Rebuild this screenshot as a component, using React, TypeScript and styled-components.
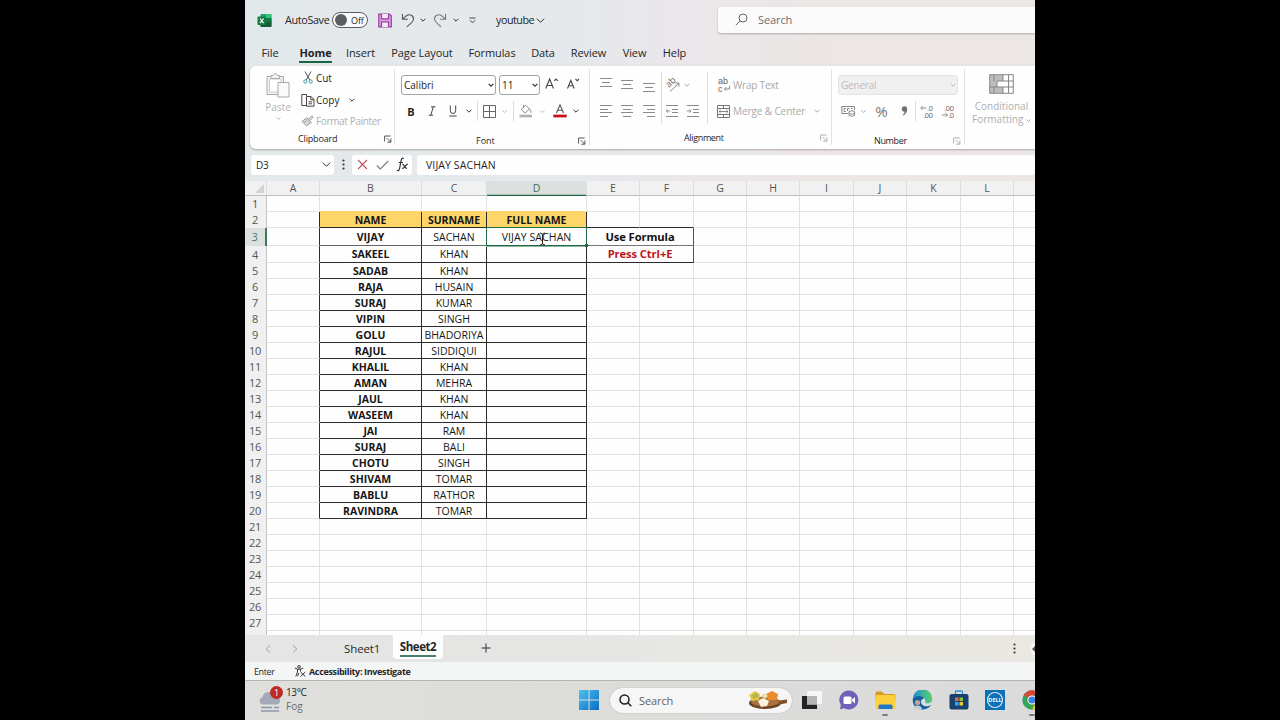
import React from "react";
import styled, { createGlobalStyle } from "styled-components";

const UI = `"Open Sans", "Noto Sans", sans-serif`;
const SMALL = `"Liberation Sans", sans-serif`;

const Global = createGlobalStyle`
  * { box-sizing: border-box; }
  body { margin: 0; background: #000; font-family: ${UI}; }
`;

const Stage = styled.div`
  width: 1280px;
  height: 720px;
  display: flex;
  justify-content: center;
  background: #000;
  overflow: hidden;
`;

const Window = styled.main`
  width: 790px;
  height: 720px;
  display: flex;
  flex-direction: column;
  overflow: hidden;
  background: linear-gradient(90deg, #e3e8ea 0%, #e5e9ec 40%, #ebe6ea 56%, #ece6e4 75%, #ece7e4 100%);
  color: #262626;
`;

const Text = styled.span<{ $size?: number; $color?: string; $bold?: boolean; $ls?: number }>`
  font-size: ${(p) => p.$size ?? 10}px;
  color: ${(p) => p.$color ?? "#262626"};
  font-weight: ${(p) => (p.$bold ? 700 : 400)};
  letter-spacing: ${(p) => p.$ls ?? 0}px;
  line-height: 1;
  white-space: nowrap;
`;

const Slot = styled.span<{ $w: number; $left?: boolean; $dy?: number }>`
  flex: none;
  width: ${(p) => p.$w}px;
  display: flex;
  align-items: center;
  justify-content: ${(p) => (p.$left ? "flex-start" : "center")};
  padding-top: ${(p) => Math.max(0, p.$dy ?? 0)}px;
  padding-bottom: ${(p) => Math.max(0, -(p.$dy ?? 0))}px;

  svg {
    flex: none;
    overflow: visible;
  }
`;

/* Title bar */
const TitleBar = styled.header`
  flex: none;
  height: 40px;
  display: flex;
  align-items: center;
  padding-left: 10px;
`;

const Toggle = styled.span`
  width: 36px;
  height: 16px;
  border: 1px solid #5c5c5c;
  border-radius: 8px;
  background: #fafafa;
  display: flex;
  align-items: center;
  gap: 4px;
  padding-left: 2px;
`;

const Knob = styled.i`
  width: 12px;
  height: 12px;
  border-radius: 50%;
  background: #5b5f61;
`;

const TitleSearch = styled.div`
  flex: 1;
  height: 26px;
  margin: 0 0 1px 172px;
  display: flex;
  align-items: center;
  gap: 10px;
  padding-left: 17px;
  background: #fcfbfb;
  border-radius: 3px 0 0 3px;
  box-shadow: 0 1px 2px rgba(0, 0, 0, 0.25);
`;

/* Ribbon */
const Tabs = styled.nav`
  flex: none;
  height: 25px;
  display: flex;
  padding-left: 9px;
`;

const Tab = styled.span<{ $w: number; $active?: boolean }>`
  width: ${(p) => p.$w}px;
  height: 25px;
  display: flex;
  justify-content: center;
  align-items: flex-start;
  padding-top: 7px;

  span {
    height: 16px;
    border-bottom: 2px solid ${(p) => (p.$active ? "#14683f" : "transparent")};
  }
`;

const Ribbon = styled.section`
  flex: none;
  height: 84px;
  margin-left: 5px;
  display: flex;
  background: #fefefe;
  border-top: 1px solid #e6e6e6;
  border-radius: 6px 0 0 6px;
  box-shadow: 0 1px 2px rgba(0, 0, 0, 0.28);
`;

const Group = styled.div<{ $w: number }>`
  flex: none;
  width: ${(p) => p.$w}px;
  display: flex;
  flex-direction: column;
  border-right: 1px solid #e2e2e2;
  margin: 3px 0 4px;
`;

const Tools = styled.div`
  flex: none;
  display: flex;
  flex-direction: column;
  height: 63px;
  padding: 3px 0 0 6px;
`;

const ToolRow = styled.div<{ $h?: number }>`
  height: ${(p) => p.$h ?? 26}px;
  display: flex;
  align-items: center;
`;

const Caption = styled.footer<{ $pad: number; $end: number }>`
  display: flex;
  flex: none;
  align-items: center;
  justify-content: space-between;
  height: 15px;
  margin-top: 1px;
  padding: 0 ${(p) => p.$end}px 0 ${(p) => p.$pad}px;
`;

const ClipTools = styled.div`
  display: flex;
  height: 63px;
`;

const PasteButton = styled.div`
  width: 49px;
  padding: 3px 0 0 7px;
  display: flex;
  flex-direction: column;
  align-items: center;
  gap: 4px;
`;

const ClipList = styled.div`
  display: flex;
  flex-direction: column;
  padding-left: 1px;
  margin-top: -2px;
`;

const Combo = styled.span<{ $w: number; $off?: boolean }>`
  width: ${(p) => p.$w}px;
  height: 20px;
  margin-right: 3px;
  display: flex;
  align-items: center;
  justify-content: space-between;
  padding: 0 1px 0 2px;
  border: 1px solid ${(p) => (p.$off ? "#e4e4e4" : "#a2a2a2")};
  border-radius: 3px;
  background: ${(p) => (p.$off ? "#f0f0f0" : "#fff")};
`;

const Rule = styled.i<{ $h?: number }>`
  width: 1px;
  height: ${(p) => p.$h ?? 20}px;
  background: #dcdcdc;
`;

const AlignTools = styled.div`
  display: flex;
  height: 63px;
  padding: 3px 0 0 5px;
`;

const AlignBlock = styled.div<{ $w: number }>`
  width: ${(p) => p.$w}px;
  flex: none;
`;

const CondButton = styled.div`
  width: 73px;
  padding-top: 8px;
  display: flex;
  flex: none;
  flex-direction: column;
  align-items: center;
  gap: 3px;
`;

const CondLabel = styled.div`
  padding-top: 4px;
  display: flex;
  flex-direction: column;
  align-items: center;
  gap: 3px;
`;

/* Formula bar */
const FormulaBar = styled.div`
  flex: none;
  height: 31px;
  margin-bottom: 1px;
  display: flex;
  align-items: center;
  padding: 0 0 0 6px;
`;

const Box = styled.div<{ $w?: number }>`
  ${(p) => (p.$w ? `width: ${p.$w}px; flex: none;` : "flex: 1;")}
  height: 20px;
  display: flex;
  align-items: center;
  background: #fefefe;
  border-radius: 3px;
`;

/* Worksheet */
const Sheet = styled.section`
  flex: none;
  height: 454px;
  display: flex;
  flex-direction: column;
  overflow: hidden;
  background: #fefefe;
`;

const Row = styled.div<{ $h: number }>`
  flex: none;
  display: flex;
  height: ${(p) => p.$h}px;
`;

const ColHead = styled.div<{ $w: number; $on?: boolean }>`
  flex: none;
  width: ${(p) => p.$w}px;
  display: flex;
  align-items: center;
  justify-content: center;
  background: ${(p) => (p.$on ? "#dce1df" : "#f1f1f1")};
  border-right: 1px solid #dfdfdf;
  border-bottom: 1px solid ${(p) => (p.$on ? "#1d6b45" : "#bdbdbd")};
  ${(p) => p.$on && "box-shadow: inset 0 -1px 0 #a9c2b5;"}
`;

const Corner = styled(ColHead)`
  justify-content: flex-end;
  padding-right: 2px;
`;

const RowHead = styled.div<{ $on?: boolean }>`
  flex: none;
  width: 22px;
  display: flex;
  align-items: center;
  justify-content: center;
  padding: 0 1px 1px 0;
  background: ${(p) => (p.$on ? "#dce1df" : "#f0f0f0")};
  border-right: ${(p) => (p.$on ? "2px solid #3d7a5c" : "1px solid #c4c4c4")};
`;

const Cell = styled.div<{ $w: number; $r?: string; $b?: string; $bg?: string; $pad?: number }>`
  position: relative;
  flex: none;
  width: ${(p) => p.$w}px;
  display: flex;
  align-items: center;
  justify-content: center;
  padding-top: ${(p) => p.$pad ?? 0}px;
  background: ${(p) => p.$bg ?? "transparent"};
  border-right: 1px solid ${(p) => p.$r ?? "#e2e2e2"};
  border-bottom: 1px solid ${(p) => p.$b ?? "#e2e2e2"};
`;

const Selection = styled.i`
  position: absolute;
  z-index: 1;
  left: -1px;
  top: -1px;
  right: -1px;
  bottom: -1px;
  border: 1px solid #1f6b46;
  box-shadow: 0 1px 0 #8fb5a1;

  &::after {
    content: "";
    position: absolute;
    right: -2px;
    bottom: -2px;
    width: 3px;
    height: 3px;
    background: #1f6b46;
  }
`;

const Caret = styled.svg`
  position: absolute;
  z-index: 2;
  left: 51px;
  top: 4px;
`;

/* Sheet tabs, status, taskbar */
const SheetTabs = styled.div`
  flex: none;
  height: 27px;
  display: flex;
  align-items: center;
  background: linear-gradient(90deg, #e4e5e4, #e6e7e4 50%, #ebe8e2);
`;

const ActiveSheet = styled.span`
  flex: none;
  width: 50px;
  height: 24px;
  align-self: flex-start;
  display: flex;
  justify-content: center;
  align-items: flex-start;
  padding-top: 6px;
  background: #fefefe;
  border-radius: 0 0 4px 4px;

  span {
    height: 16px;
    border-bottom: 2px solid #4a8069;
  }
`;

const RoundBtn = styled.span`
  flex: none;
  width: 4px;
  height: 12px;
  margin-left: 4px;
  border-radius: 4px 0 0 4px;
  background: #f8f7f6;
  display: flex;
  align-items: center;
  justify-content: flex-end;
`;

const StatusBar = styled.div`
  flex: none;
  height: 19px;
  display: flex;
  align-items: center;
  padding-left: 9px;
  background: #f4f5f5;
  border-bottom: 1px solid #b3b4b4;
`;

const Taskbar = styled.footer`
  flex: 1;
  display: flex;
  align-items: center;
  padding: 0 0 1px 13px;
  background: linear-gradient(90deg, #dfe0dd, #dcddd9 45%, #dbdbdb 100%);
`;

const Weather = styled.div`
  flex: none;
  width: 318px;
  display: flex;
  gap: 3px;
`;

const WeatherText = styled.div`
  display: flex;
  flex-direction: column;
  gap: 4px;
  padding-top: 1px;
`;

const TaskSearch = styled.div`
  flex: none;
  width: 182px;
  height: 25px;
  margin: 0 1.6px 0 9px;
  border-radius: 13px;
  background: #f6f6f6;
  box-shadow: 0 0 1px rgba(0, 0, 0, 0.35);
  display: flex;
  align-items: center;
  padding-left: 9px;
`;

const TaskApp = styled.span<{ $open?: boolean }>`
  width: 36.7px;
  flex: none;
  height: 34px;
  display: flex;
  flex-direction: column;
  align-items: center;
  justify-content: center;
  position: relative;

  &::after {
    content: "";
    position: absolute;
    bottom: 1px;
    width: 6px;
    height: 2px;
    border-radius: 1px;
    background: ${(p) => (p.$open ? "#7b7b7b" : "transparent")};
  }
`;

const Chevron = ({ s = 6, c = "#333", w = 1 }: { s?: number; c?: string; w?: number }) => (
  <svg width={s} height={s} viewBox="0 0 6 6" fill="none" stroke={c} strokeWidth={(w * 6) / s}>
    <path d="M.6 1.8 3 4.2 5.4 1.8" />
  </svg>
);

const Launcher = ({ c = "#444" }: { c?: string }) => (
  <svg width="8" height="8" viewBox="0 0 8 8" fill="none" stroke={c} strokeWidth=".9">
    <path d="M.6 6.5V1h6M2.8 3.2 6.6 7M6.9 3.4V7.2H3.2" />
  </svg>
);

const Lines = ({ rows, c = "#8a8a8a" }: { rows: [number, number, number][]; c?: string }) => (
  <svg width="14" height="14" viewBox="0 0 14 14" stroke={c} strokeWidth="1">
    {rows.map(([x1, x2, y], i) => (
      <path key={i} d={`M${x1} ${y}H${x2}`} />
    ))}
  </svg>
);

const TopAlign = () => <Lines rows={[[1, 13, 0.5], [3, 11, 4.5], [1, 13, 8.5]]} />;
const MidAlign = () => <Lines rows={[[1, 13, 2.5], [3, 11, 6.5], [1, 13, 10.5]]} />;
const BotAlign = () => <Lines rows={[[1, 13, 5.5], [3, 11, 9.5], [1, 13, 13.5]]} />;
const LeftAlign = () => <Lines rows={[[1, 13, 1.5], [1, 9, 5.5], [1, 13, 8.5], [1, 9, 12.5]]} />;
const CenterAlign = () => <Lines rows={[[1, 13, 1.5], [3, 11, 5.5], [1, 13, 8.5], [3, 11, 12.5]]} />;
const RightAlign = () => <Lines rows={[[1, 13, 1.5], [5, 13, 5.5], [1, 13, 8.5], [5, 13, 12.5]]} />;

const Indent = ({ out }: { out?: boolean }) => (
  <svg width="14" height="14" viewBox="0 0 14 14" fill="none" stroke="#8a8a8a">
    <path d="M1 1.5H13M7 5.5H13M7 8.5H13M1 12.5H13" />
    <path d={out ? "M5.5 7H1.2M3 5.3 1.2 7 3 8.7" : "M.8 7H5M3.3 5.3 5 7 3.3 8.7"} strokeWidth=".9" />
  </svg>
);

const gridWidths = [53, 102, 65, 100, 53, 54, 53, 53, 54, 53, 54, 53, 22];
const letters = ["A", "B", "C", "D", "E", "F", "G", "H", "I", "J", "K", "L", ""];

const people: [string, string][] = [
  ["VIJAY", "SACHAN"],
  ["SAKEEL", "KHAN"],
  ["SADAB", "KHAN"],
  ["RAJA", "HUSAIN"],
  ["SURAJ", "KUMAR"],
  ["VIPIN", "SINGH"],
  ["GOLU", "BHADORIYA"],
  ["RAJUL", "SIDDIQUI"],
  ["KHALIL", "KHAN"],
  ["AMAN", "MEHRA"],
  ["JAUL", "KHAN"],
  ["WASEEM", "KHAN"],
  ["JAI", "RAM"],
  ["SURAJ", "BALI"],
  ["CHOTU", "SINGH"],
  ["SHIVAM", "TOMAR"],
  ["BABLU", "RATHOR"],
  ["RAVINDRA", "TOMAR"],
];

const INK = "#2b2b2b";
const GOLD = "#fdd568";

const rowHeight = (n: number) => (n === 3 ? 18 : n === 4 ? 17 : 16);

const SheetRow = ({ n }: { n: number }) => {
  const person = people[n - 3];
  const inTable = n >= 2 && n <= 20;
  const heads = ["", "NAME", "SURNAME", "FULL NAME"];
  const cells: React.ReactNode[] = [];
  gridWidths.forEach((w, i) => {
    if (i === 5 && (n === 3 || n === 4)) return;
    if (i === 4 && (n === 3 || n === 4)) {
      cells.push(
        <Cell key={i} $w={107} $r="#555" $b={n === 3 ? "#777" : INK}>
          <Text $size={11.2} $bold $ls={-0.1} $color={n === 3 ? "#111" : "#c01320"}>
            {n === 3 ? "Use Formula" : "Press Ctrl+E"}
          </Text>
        </Cell>
      );
      return;
    }
    const body = inTable && i >= 1 && i <= 3;
    const right = inTable && i <= 3 ? INK : undefined;
    let bottom: string | undefined = body ? (n === 3 ? "#666" : INK) : undefined;
    if (n === 1 && i >= 1 && i <= 3) bottom = GOLD;
    if (n === 2 && (i === 4 || i === 5)) bottom = INK;
    let label = "";
    if (body) label = n === 2 ? heads[i] : i === 3 ? (n === 3 ? "VIJAY SACHAN" : "") : person[i - 1];
    cells.push(
      <Cell key={i} $w={w} $r={right} $b={bottom} $pad={n === 4 ? 0 : 1} $bg={body && n === 2 ? GOLD : undefined}>
        {label && (
          <Text $size={10.5} $bold={n === 2 || i === 1} $ls={i === 3 && n === 3 ? 0.1 : 0} $color="#161616">
            {label}
          </Text>
        )}
        {n === 3 && i === 3 && (
          <>
            <Selection />
            <Caret width="9" height="14" viewBox="0 0 9 14" fill="none" stroke="#222">
              <path d="M2 1Q4.5 1 4.5 3V11Q4.5 13 2 13M7 1Q4.5 1 4.5 3M7 13Q4.5 13 4.5 11" />
            </Caret>
          </>
        )}
      </Cell>
    );
  });
  return (
    <Row $h={rowHeight(n)}>
      <RowHead $on={n === 3}>
        <Text $size={11} $ls={-0.2} $color={n === 3 ? "#4a7a64" : "#555"}>{n}</Text>
      </RowHead>
      {cells}
    </Row>
  );
};

const ExcelLogo = () => (
  <svg width="15" height="15" viewBox="0 0 15 15">
    <rect x="3.5" y="1" width="11" height="13" rx="1" fill="#21a366" />
    <path d="M9 1h4.5a1 1 0 0 1 1 1v3H9z" fill="#33c481" />
    <path d="M3.5 8h11v5a1 1 0 0 1-1 1h-9a1 1 0 0 1-1-1z" fill="#185c37" />
    <path d="M9 5h5.5v4H9z" fill="#107c41" />
    <rect x="0.5" y="3.5" width="8.5" height="8.5" rx="1" fill="#107c41" />
    <path d="m3 5.5 3.6 4.7M6.6 5.5 3 10.2" stroke="#fff" strokeWidth="1.2" />
  </svg>
);

const SaveIcon = () => (
  <svg width="14" height="15" viewBox="0 0 14 15" fill="#dfa0e2" stroke="#9a3fa6" strokeWidth="1.2">
    <path d="M.8 1.1H11.5L13.300 2.800V13.900H.8Z" />
    <path d="M3.500 1.100V5.800H10.500V1.100M3.500 13.900V8.800H10.500V13.900" fill="#f3eef5" />
  </svg>
);

const Undo = ({ flip }: { flip?: boolean }) => (
  <svg width="14" height="15" viewBox="0 0 14 15" fill="none" stroke={flip ? "#777" : "#555"} strokeWidth="1.1">
    <g transform={flip ? "matrix(-1 0 0 1 14 0)" : undefined}>
      <path d="M1.500 1V6.300H6.800M1.700 6.100 5.500 2.700C8.500.4 12.800 2.700 12.500 6.200 12.300 8.500 9.500 10.800 6 13.800" />
    </g>
  </svg>
);

const PasteIcon = () => (
  <svg width="24" height="26" viewBox="0 0 24 26" fill="#f3f3f3" stroke="#a9a9a9">
    <path d="M1 4.500H17.500V22.500H1Z" />
    <path d="M3.500 7H15V20H3.500Z" fill="#fff" stroke="#ccc" />
    <path d="M5 6.500V3.500H7.300Q9.300-.8 11.300 3.500H13.500V6.500Z" />
    <path d="M12 10.500H23V25H12Z" fill="#fafafa" />
  </svg>
);

const CutIcon = () => (
  <svg width="10" height="13" viewBox="0 0 10 13" fill="none" stroke="#4d5a60">
    <path d="M2 .5 6.800 9M8 .5 3.200 9" />
    <circle cx="2.300" cy="10.500" r="1.600" stroke="#3f92a8" />
    <circle cx="7.700" cy="10.500" r="1.600" stroke="#3f92a8" />
  </svg>
);

const CopyIcon = () => (
  <svg width="14" height="14" viewBox="0 0 14 14" fill="none" stroke="#444">
    <path d="M5.500 12.500H.8V1.500H5.500V3" />
    <path d="M5.500 3.500H10L13 6.500V13.200H5.500ZM9.800 3.500V6.700H13M7.500 8.800H11M7.500 10.800H11" />
  </svg>
);

const BrushIcon = () => (
  <svg width="13" height="12" viewBox="0 0 14 13" fill="#d8d8d8" stroke="#999">
    <path d="M8 4.500 11.700.8 13.200 2.300 9.500 6M6 2.800 11.200 8 9.500 9.500 4.500 4.300Z" />
    <path d="M4.500 4.500 1 6.800 6 12 9.300 9.200M3 8.500 5 7" />
  </svg>
);

const BordersIcon = () => (
  <svg width="13" height="13" viewBox="0 0 13 13" fill="none" stroke="#666">
    <path d="M.5.5H12.500V12.500H.5ZM6.500.5V12.500M.5 6.500H12.500" />
  </svg>
);

const FillIcon = () => (
  <svg width="14" height="14" viewBox="0 0 14 14" fill="none" stroke="#8b8b8b">
    <path d="M6.500 1 10.500 5 6 9.200 2.200 5.400 6.500 1.200M4.500 1V4M10.500 4.800Q12.500 6.500 11.800 8.800" />
    <path d="M.5 12H13" stroke="#b0b0b0" strokeWidth="2.600" />
  </svg>
);

const FontColorIcon = () => (
  <svg width="14" height="14" viewBox="0 0 14 14" fill="none" stroke="#555" strokeWidth="1.1">
    <path d="M3.500 9 7 .8 10.500 9M4.700 6.300H9.300" />
    <path d="M.3 12H13.700" stroke="#c8141c" strokeWidth="2.800" />
  </svg>
);

const FontSizeIcon = ({ down }: { down?: boolean }) => (
  <svg width="14" height="14" viewBox="0 0 14 14" fill="none" stroke="#444" strokeWidth="1.1">
    <path d={down ? "M1.500 10.500 4.800 2.500 8.200 10.500M2.800 7.800H7" : "M.8 10.500 4.600 1 8.500 10.500M2.200 7.500H7.200"} />
    <path d={down ? "M9.500 1 11.300 2.800 13 1" : "M9.300 2.800 11 1 12.800 2.800"} />
  </svg>
);

const OrientIcon = () => (
  <svg width="15" height="14" viewBox="0 0 15 14" fill="none" stroke="#888">
    <text transform="translate(4 10) rotate(-45)" fontSize="9" fill="#666" stroke="none" fontFamily={UI}>ab</text>
    <path d="M5 13.500 13.500 5.500M10.200 5H13.900V8.700" />
  </svg>
);

const WrapIcon = () => (
  <svg width="13" height="14" viewBox="0 0 13 14" fill="none" stroke="#888">
    <text x="0" y="6" fontSize="9" fill="#666" stroke="none" fontFamily={SMALL}>ab</text>
    <text x="0" y="13.500" fontSize="9" fill="#666" stroke="none" fontFamily={SMALL}>c</text>
    <path d="M11.500 8V11H6.500M8.300 9.200 6.500 11 8.300 12.800" />
  </svg>
);

const MergeIcon = () => (
  <svg width="13" height="13" viewBox="0 0 13 13" fill="none" stroke="#777">
    <path d="M.5.5H12.500V12.500H.5ZM.5 3.500H12.500M.5 9.500H12.500M6.500.5V3.500M6.500 9.500V12.500" />
    <path d="M2 6.500H11M3.700 4.900 2 6.500 3.700 8.100M9.300 4.900 11 6.500 9.300 8.100" strokeWidth=".9" />
  </svg>
);

const MoneyIcon = () => (
  <svg width="15" height="12" viewBox="0 0 15 12" fill="none" stroke="#888">
    <path d="M7 8.500H.8V1.500H13.500V5M4.800 3.500H3V6.500H4.800M8.300 3.500H6.500V6M11.500 3.500H10" />
    <path d="M8 6.500Q10.800 5 13.600 6.500V10.500Q10.800 12 8 10.500ZM8 8.500Q10.800 9.800 13.600 8.500" fill="#fff" />
  </svg>
);

const DecimalIcon = ({ more }: { more?: boolean }) => (
  <svg width="14" height="14" viewBox="0 0 14 14" fill="none" stroke="#888">
    <text x={more ? 7 : 3} y="6.500" fontSize="7.500" letterSpacing="-.3" fill="#666" stroke="none" fontFamily={SMALL}>{more ? ".0" : ".00"}</text>
    <text x={more ? 3 : 7} y="13.500" fontSize="7.500" letterSpacing="-.3" fill="#666" stroke="none" fontFamily={SMALL}>{more ? ".00" : ".0"}</text>
    <path d={more ? "M6.500 4H.8M2.800 2 .8 4 2.800 6" : "M.8 11H6.500M4.500 9 6.500 11 4.500 13"} strokeWidth=".9" />
  </svg>
);

const CondIcon = () => (
  <svg width="25" height="20" viewBox="0 0 25 20" fill="none">
    <path d="M1 1H14V7H1ZM1 7H8V13H1ZM1 13H14V19H1Z" fill="#bdbdbd" />
    <path d="M.7.7H24.300V19.300H.7ZM14 7H24.300M8 7H14M.7 13H24.300M5 .7V7M14 .7V7M5 13V19M8 7V13M14 13V19M19.500.7V19" stroke="#858585" />
  </svg>
);

const Dots = () => (
  <svg width="3" height="11" viewBox="0 0 3 11" fill="#333">
    <circle cx="1.500" cy="1.500" r="1.100" />
    <circle cx="1.500" cy="5.500" r="1.100" />
    <circle cx="1.500" cy="9.500" r="1.100" />
  </svg>
);

const TitleArea = () => (
  <TitleBar>
    <Slot $w={18}><ExcelLogo /></Slot>
    <Slot $w={12} />
    <Slot $w={46} $left><Text $size={10.8} $ls={-0.35}>AutoSave</Text></Slot>
    <Slot $w={38}>
      <Toggle>
        <Knob />
        <Text $size={9} $ls={-0.1}>Off</Text>
      </Toggle>
    </Slot>
    <Slot $w={32}><SaveIcon /></Slot>
    <Slot $w={14}><Undo /></Slot>
    <Slot $w={16}><Chevron s={6} /></Slot>
    <Slot $w={18}><Undo flip /></Slot>
    <Slot $w={13}><Chevron s={6} /></Slot>
    <Slot $w={20}>
      <svg width="7" height="7" viewBox="0 0 7 7" fill="none" stroke="#444"><path d="M.5 1H6.500M1 3.300 3.500 5.800 6 3.300" /></svg>
    </Slot>
    <Slot $w={14} />
    <Slot $w={38} $left><Text $size={10.8} $ls={-0.5}>youtube</Text></Slot>
    <Slot $w={12}><Chevron s={9} /></Slot>
    <TitleSearch>
      <svg width="13" height="13" viewBox="0 0 13 13" fill="none" stroke="#666"><circle cx="8" cy="5" r="4" /><path d="M5 8 .8 12.200" /></svg>
      <Slot $w={40} $left $dy={-1}><Text $size={11} $ls={-0.1} $color="#6c6c6c">Search</Text></Slot>
    </TitleSearch>
  </TitleBar>
);

const tabs: [string, number][] = [
  ["File", 32], ["Home", 59], ["Insert", 31], ["Page Layout", 92], ["Formulas", 48], ["Data", 54], ["Review", 37], ["View", 55], ["Help", 25],
];

const Clipboard = () => (
  <Group $w={145}>
    <ClipTools>
      <PasteButton>
        <PasteIcon />
        <Text $size={10} $color="#b4b4b4">Paste</Text>
        <Chevron s={5} c="#bbb" />
      </PasteButton>
      <ClipList>
        <ToolRow $h={21}><Slot $w={15}><CutIcon /></Slot><Slot $w={1} /><Text $size={10} $ls={-0.1}>Cut</Text></ToolRow>
        <ToolRow $h={23}><Slot $w={15}><CopyIcon /></Slot><Slot $w={1} /><Slot $w={33} $left><Text $size={10}>Copy</Text></Slot><Chevron s={6} /></ToolRow>
        <ToolRow $h={19}><Slot $w={15}><BrushIcon /></Slot><Slot $w={1} /><Text $size={10} $ls={-0.35} $color="#b2b2b2">Format Painter</Text></ToolRow>
      </ClipList>
    </ClipTools>
    <Caption $pad={48} $end={2}><Text $size={9} $ls={-0.15}>Clipboard</Text><Launcher /></Caption>
  </Group>
);

const FontGroup = () => (
  <Group $w={195}>
    <Tools>
      <ToolRow>
        <Combo $w={95}><Text $size={10}>Calibri</Text><Chevron s={6} w={1.2} /></Combo>
        <Combo $w={41}><Text $size={10}>11</Text><Chevron s={6} w={1.2} /></Combo>
        <Slot $w={18}><FontSizeIcon /></Slot>
        <Slot $w={24}><FontSizeIcon down /></Slot>
      </ToolRow>
      <ToolRow>
        <Slot $w={20}><Text $size={11} $bold>B</Text></Slot>
        <Slot $w={22}>
          <svg width="8" height="10" viewBox="0 0 8 10" fill="none" stroke="#444"><path d="M3 .8H7.500M.8 9.200H5M5.300.8 2.800 9.200" /></svg>
        </Slot>
        <Slot $w={20}>
          <svg width="8" height="12" viewBox="0 0 8 12" fill="none" stroke="#444"><path d="M1.300.5V5.500Q1.300 8.500 4 8.500T6.700 5.500V.5M.3 11H7.700" /></svg>
        </Slot>
        <Slot $w={12}><Chevron s={6} /></Slot>
        <Slot $w={5}><Rule /></Slot>
        <Slot $w={18}><BordersIcon /></Slot>
        <Slot $w={13}><Chevron s={5} c="#bbb" /></Slot>
        <Slot $w={4}><Rule /></Slot>
        <Slot $w={21}><FillIcon /></Slot>
        <Slot $w={12}><Chevron s={5} c="#bbb" /></Slot>
        <Slot $w={24}><FontColorIcon /></Slot>
        <Slot $w={8}><Chevron s={6} /></Slot>
      </ToolRow>
    </Tools>
    <Caption $pad={81} $end={3}><Text $size={9}>Font</Text><Launcher /></Caption>
  </Group>
);

const AlignmentGroup = () => (
  <Group $w={242}>
    <AlignTools>
      <AlignBlock $w={112}>
        <ToolRow>
          <Slot $w={22}><TopAlign /></Slot>
          <Slot $w={20}><MidAlign /></Slot>
          <Slot $w={23}><BotAlign /></Slot>
          <Slot $w={2}><Rule $h={26} /></Slot>
          <Slot $w={20}><OrientIcon /></Slot>
          <Slot $w={9}><Chevron s={6} c="#aaa" /></Slot>
        </ToolRow>
        <ToolRow>
          <Slot $w={22}><LeftAlign /></Slot>
          <Slot $w={20}><CenterAlign /></Slot>
          <Slot $w={23}><RightAlign /></Slot>
          <Slot $w={2}><Rule $h={26} /></Slot>
          <Slot $w={20}><Indent out /></Slot>
          <Slot $w={22}><Indent /></Slot>
        </ToolRow>
      </AlignBlock>
      <Rule $h={52} />
      <AlignBlock $w={122}>
        <ToolRow><Slot $w={10} /><Slot $w={15} $left><WrapIcon /></Slot><Text $size={10} $ls={-0.2} $color="#a9a9a9">Wrap Text</Text></ToolRow>
        <ToolRow><Slot $w={9} /><Slot $w={16} $left><MergeIcon /></Slot><Slot $w={81} $left><Text $size={10} $ls={-0.1} $color="#a9a9a9">Merge &amp; Center</Text></Slot><Chevron s={6} c="#aaa" /></ToolRow>
      </AlignBlock>
    </AlignTools>
    <Caption $pad={94} $end={3}><Text $size={9} $ls={-0.35}>Alignment</Text><Launcher c="#aaa" /></Caption>
  </Group>
);

const NumberGroup = () => (
  <Group $w={133}>
    <Tools>
      <ToolRow><Combo $w={120} $off><Text $size={10} $ls={-0.2} $color="#bdbdbd">General</Text><Chevron s={6} c="#bbb" /></Combo></ToolRow>
      <ToolRow>
        <Slot $w={20}><MoneyIcon /></Slot>
        <Slot $w={11}><Chevron s={5} c="#aaa" /></Slot>
        <Slot $w={25}><Text $size={15} $color="#777">%</Text></Slot>
        <Slot $w={20}>
          <svg width="7" height="10" viewBox="0 0 7 10" fill="#707070"><path d="M.8 3A2.700 2.700 0 0 1 6.200 3C6.200 6 4.500 8.600 2 9.600L1.500 8.900C2.800 7.900 3.600 6.900 3.600 5.700 2 5.800.8 4.600.8 3Z" /></svg>
        </Slot>
        <Slot $w={3}><Rule /></Slot>
        <Slot $w={20}><DecimalIcon more /></Slot>
        <Slot $w={22}><DecimalIcon /></Slot>
      </ToolRow>
    </Tools>
    <Caption $pad={42} $end={3}><Text $size={9} $ls={-0.35}>Number</Text><Launcher c="#aaa" /></Caption>
  </Group>
);

const FolderIcon = () => (
  <svg width="21" height="19" viewBox="0 0 21 19">
    <path d="M.5 2a1.500 1.500 0 0 1 1.500-1.500h5l2 2.500h10a1.500 1.500 0 0 1 1.500 1.500V10H.5z" fill="#d79a1c" />
    <rect x=".5" y="4" width="20" height="14" rx="1.500" fill="#fccf3f" />
    <path d="M3.500 18V15a1.500 1.500 0 0 1 1.500-1.500H16a1.500 1.500 0 0 1 1.500 1.500V18z" fill="#1d78c6" />
  </svg>
);

const App = () => (
  <>
    <Global />
    <Stage>
      <Window>
        <TitleArea />
        <Tabs>
          {tabs.map(([t, w]) => (
            <Tab key={t} $w={w} $active={t === "Home"}>
              <Text $size={11} $bold={t === "Home"} $ls={-0.1}>{t}</Text>
            </Tab>
          ))}
        </Tabs>
        <Ribbon>
          <Clipboard />
          <FontGroup />
          <AlignmentGroup />
          <NumberGroup />
          <CondButton>
            <CondIcon />
            <CondLabel>
              <Text $size={10} $color="#b0b0b0">Conditional</Text>
              <Text $size={10} $color="#b0b0b0">Formatting <Chevron s={5} c="#aaa" /></Text>
            </CondLabel>
          </CondButton>
        </Ribbon>
        <FormulaBar>
          <Box $w={83}>
            <Slot $w={5} /><Slot $w={66} $left><Text $size={10} $ls={-0.2}>D3</Text></Slot><Chevron s={9} />
          </Box>
          <Slot $w={18}><Dots /></Slot>
          <Box $w={60}>
            <Slot $w={20}><svg width="11" height="11" viewBox="0 0 11 11" stroke="#bd5560" strokeWidth="1.1"><path d="M1 1 10 10M10 1 1 10" /></svg></Slot>
            <Slot $w={20}><svg width="13" height="10" viewBox="0 0 13 10" fill="none" stroke="#6b8474" strokeWidth="1.1"><path d="M.8 5.500 4.300 9 12.300 1" /></svg></Slot>
            <Slot $w={20}>
              <svg width="13" height="15" viewBox="0 0 13 15" fill="none" stroke="#333" strokeWidth="1.2"><path d="M7.800 1.500C5.800.5 5.300 2.500 4.900 4.500L3.600 11.500C3.200 13.500 2.300 14 .8 13.300M2.800 5.500H7M6.300 7.500C8.500 6.800 8.500 12 11 11.300M11.800 7.200C9.500 7.200 9 11.800 6 11.500" /></svg>
            </Slot>
          </Box>
          <Slot $w={5} />
          <Box><Slot $w={9} /><Slot $w={80} $left $dy={1}><Text $size={10.5} $ls={0.1}>VIJAY SACHAN</Text></Slot></Box>
        </FormulaBar>
        <Sheet>
          <Row $h={15}>
            <Corner $w={22}><svg width="9" height="9" viewBox="0 0 9 9"><path d="M9 0V9H0Z" fill="#d2d3d3" /></svg></Corner>
            {gridWidths.map((w, i) => (
              <ColHead key={i} $w={w} $on={i === 3}><Text $size={10.5} $color={i === 3 ? "#3b6d57" : "#555"}>{letters[i]}</Text></ColHead>
            ))}
          </Row>
          {Array.from({ length: 28 }, (_, i) => <SheetRow key={i} n={i + 1} />)}
        </Sheet>
        <SheetTabs>
          <Slot $w={45}><svg width="6" height="8" viewBox="0 0 6 8" fill="none" stroke="#a0a0a0"><path d="M5 .5 1.200 4 5 7.500" /></svg></Slot>
          <Slot $w={10}><svg width="6" height="8" viewBox="0 0 6 8" fill="none" stroke="#a0a0a0"><path d="M1 .5 4.800 4 1 7.500" /></svg></Slot>
          <Slot $w={44} />
          <Slot $w={49} $left $dy={1}><Text $size={11.5} $ls={-0.1}>Sheet1</Text></Slot>
          <ActiveSheet><Text $size={11.5} $bold $ls={-0.45}>Sheet2</Text></ActiveSheet>
          <Slot $w={86} $dy={-1}><svg width="10" height="10" viewBox="0 0 10 10" stroke="#333"><path d="M5 .5V9.500M.5 5H9.500" /></svg></Slot>
          <Slot $w={473} />
          <Slot $w={25}><Dots /></Slot>
          <RoundBtn><svg width="3" height="6" viewBox="0 0 3 6"><path d="M3 0V6L0 3Z" fill="#555" /></svg></RoundBtn>
        </SheetTabs>
        <StatusBar>
          <Slot $w={40} $left><Text $size={9} $ls={-0.4}>Enter</Text></Slot>
          <Slot $w={15} $left>
            <svg width="12" height="12" viewBox="0 0 12 12" fill="none" stroke="#333"><circle cx="5" cy="1.800" r="1.300" /><path d="M.8 3 3.500 4.200V7L1.800 11.300M9.200 3 6.500 4.200V6.500M3.500 11.300 5 8M3.500 4.200H6.500M6.500 7 11.300 11.500M11.300 7 6.500 11.500" /></svg>
          </Slot>
          <Text $size={9} $bold $ls={-0.35}>Accessibility: Investigate</Text>
        </StatusBar>
        <Taskbar>
          <Weather>
            <svg width="25" height="28" viewBox="0 0 25 28">
              <path d="M4 18.500A4 4 0 0 1 4.500 11 6.500 6.500 0 0 1 17 10.500 4 4 0 0 1 19 18.500Z" fill="#a3a9b8" />
              <path d="M3 21.500H14M16 21.500H21M3 25H21" stroke="#8d95aa" strokeWidth="1.500" />
              <circle cx="18.500" cy="6.500" r="6.500" fill="#bd2c22" />
              <text x="18.500" y="10" fontSize="9" fill="#fff" textAnchor="middle" fontFamily={UI}>1</text>
            </svg>
            <WeatherText>
              <Text $size={10} $ls={-0.4}>13°C</Text>
              <Text $size={10} $color="#6d6d6d">Fog</Text>
            </WeatherText>
          </Weather>
          <Slot $w={25}>
            <svg width="20" height="20" viewBox="0 0 20 20"><defs><linearGradient id="w" x2="1" y2="1"><stop stopColor="#4cc2f1" /><stop offset="1" stopColor="#0a6bc2" /></linearGradient></defs><path d="M0 0H9.500V9.500H0ZM10.500 0H20V9.500H10.500ZM0 10.500H9.500V20H0ZM10.500 10.500H20V20H10.500Z" fill="url(#w)" /></svg>
          </Slot>
          <TaskSearch>
            <Slot $w={20} $left><svg width="13" height="13" viewBox="0 0 13 13" fill="none" stroke="#222" strokeWidth="1.500"><circle cx="5.500" cy="5.500" r="4.500" /><path d="M8.800 8.800 12.300 12.300" /></svg></Slot>
            <Slot $w={109} $left><Text $size={11} $ls={-0.1} $color="#626262">Search</Text></Slot>
            <svg width="40" height="20" viewBox="0 0 40 20">
              <ellipse cx="17" cy="13" rx="16" ry="6" fill="#6f4423" />
              <path d="M28 11 39 9.500V13L29 15Z" fill="#7d4e2a" />
              <ellipse cx="17" cy="11.500" rx="14" ry="5" fill="#a97442" />
              <path d="M1 5 7 1 12 4 11 10 4 11Z" fill="#e3c545" />
              <path d="M4 5 8 3 11 6 6 9Z" fill="#a9b751" />
              <path d="M18 4 24 1 30 4 29 10 20 10Z" fill="#ea8b2d" />
              <path d="M13 5 17 3 20 6 17 9Z" fill="#efe0a9" />
              <path d="M10 11 15 8 21 11 19 16 13 17Z" fill="#faf3dc" />
            </svg>
          </TaskSearch>
          <TaskApp><svg width="20" height="20" viewBox="0 0 20 20"><rect x="5" y="1" width="15" height="13" rx="1" fill="#f7f7f7" /><path d="M0 6H5V14.500H15V19H0Z" fill="#242424" /><path d="M5 6H15V14.500H5Z" fill="#b4b4b4" /></svg></TaskApp>
          <TaskApp><svg width="20" height="20" viewBox="0 0 20 20"><path d="M10 .5A9.500 9.500 0 1 1 5 18.200L1 19.300 1.800 15A9.500 9.500 0 0 1 10 .5Z" fill="#6f62b8" /><rect x="4.500" y="6.500" width="8" height="7.500" rx="1.500" fill="#fff" /><path d="M13 9.500 16 7V13.500L13 11Z" fill="#fff" /></svg></TaskApp>
          <TaskApp $open><FolderIcon /></TaskApp>
          <TaskApp><svg width="21" height="20" viewBox="0 0 21 20"><defs><linearGradient id="e" x2="1"><stop stopColor="#1f8fd6" /><stop offset="1" stopColor="#5ad06a" /></linearGradient></defs><path d="M.8 9A9.700 9.700 0 0 1 20.300 9C20.500 12 18 13.500 15.500 13.300 12.500 13.200 13.500 11.500 13.200 10 12.500 6.500 6 5.500 .8 9Z" fill="url(#e)" /><path d="M.8 9C3 5.500 10 5 12 8.500 8.500 9 8 13 10.500 15 13 17 16.500 16.500 19 15 16.500 19.500 10 21 5 18 1.500 16 .5 12 .8 9Z" fill="#14609f" /><circle cx="5.500" cy="12.500" r="2.600" fill="#c9a48c" /><path d="M1 19.500Q1.500 15.500 5.500 15.500T10 19.500Z" fill="#c9ced3" /></svg></TaskApp>
          <TaskApp><svg width="20" height="20" viewBox="0 0 20 20"><path d="M6.500 5V2Q6.500 1 7.500 1H12.500Q13.500 1 13.500 2V5" fill="none" stroke="#2d8fd5" strokeWidth="1.300" /><rect x=".5" y="4" width="19" height="15.500" rx="2" fill="#17426f" /><path d="M6 7.500H9.500V11H6Z" fill="#e8663c" /><path d="M10.500 7.500H14V11H10.500Z" fill="#8cc63f" /><path d="M6 12H9.500V15.500H6Z" fill="#35a7e8" /><path d="M10.500 12H14V15.500H10.500Z" fill="#f8c631" /></svg></TaskApp>
          <TaskApp><svg width="20" height="20" viewBox="0 0 20 20"><rect width="20" height="20" fill="#0e71b8" /><circle cx="10" cy="10" r="7.500" fill="none" stroke="#d8ecf8" strokeWidth="1.200" /><text x="10" y="12" fontSize="5.500" fontWeight="700" fill="#fff" textAnchor="middle" fontFamily={UI}>DELL</text></svg></TaskApp>
          <TaskApp $open><svg width="20" height="20" viewBox="0 0 20 20"><circle cx="10" cy="10" r="9.700" fill="#34a356" /><path d="M10 10 1.600 5.200A9.700 9.700 0 0 1 18.400 5.200H10Z" fill="#db4437" /><path d="M18.400 5.200A9.700 9.700 0 0 1 10 19.700L14 11V5.200Z" fill="#f7c52d" /><circle cx="10" cy="10" r="4.600" fill="#fff" /><circle cx="10" cy="10" r="3.600" fill="#3f7fe8" /></svg></TaskApp>
        </Taskbar>
      </Window>
    </Stage>
  </>
);

export default App;
